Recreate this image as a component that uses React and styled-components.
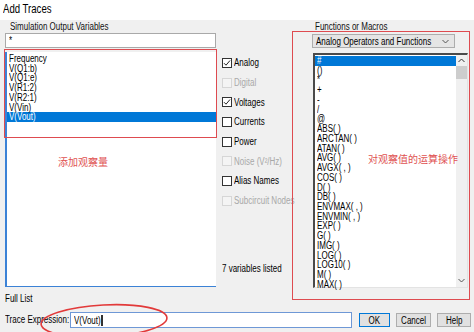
import React from "react";
import styled, { createGlobalStyle } from "styled-components";

const GlobalStyle = createGlobalStyle`
  html, body {
    margin: 0;
    padding: 0;
    background: #f0f0f0;
  }
  body {
    width: 474px;
    height: 332px;
    overflow: hidden;
    font-family: "Liberation Sans", Arial, sans-serif;
    color: #000;
  }
`;

// the dialog text is a narrow sans, so regular Arial metrics are squeezed
const T = styled.span`
  display: inline-block;
  white-space: nowrap;
  transform: scaleX(0.8);
  transform-origin: ${(p) => (p.center ? "50% 50%" : "0 50%")};
`;

const Window = styled.div`
  position: relative;
  width: 474px;
  height: 332px;
  display: flex;
  flex-direction: column;
  background: #f0f0f0;
`;

const TitleBar = styled.div`
  height: 20px;
  background: #fff;
  font-size: 12px;
  line-height: 18px;
  padding-left: 3px;
  box-sizing: border-box;
`;

const Main = styled.div`
  display: flex;
  height: 270px;
  padding-left: 5px;
`;

const LeftCol = styled.div`
  width: 211px;
  display: flex;
  flex-direction: column;
`;

const SectionLabel = styled.div`
  height: 13px;
  font-size: 10px;
  line-height: 14px;
  padding-left: ${(p) => p.indent || 5}px;
  color: #111;
`;

const TextBox = styled.div`
  height: ${(p) => (p.focused ? 16 : 15)}px;
  box-sizing: border-box;
  border: 1px solid ${(p) => (p.focused ? "#6e98d6" : "#a9a9a9")};
  background: #fff;
  font-size: 10px;
  line-height: 13px;
  padding-left: 3px;
  width: ${(p) => p.width || "auto"};
  display: flex;
  align-items: center;
`;

const Caret = styled.span`
  display: inline-block;
  vertical-align: middle;
  width: 1.5px;
  height: 11px;
  background: #000;
  margin-left: 1px;
`;

const VarList = styled.div`
  position: relative;
  margin-top: 4px;
  height: 235px;
  box-sizing: border-box;
  background: #fff;
  border-left: 2px solid #3b82d6;
  border-bottom: 1px solid #3b82d6;
  padding-top: 2px;
`;

const Item = styled.div`
  height: 9.74px;
  line-height: 9.74px;
  font-size: 10px;
  padding-left: 2px;
  white-space: nowrap;
  background: ${(p) => (p.selected ? "#0078d7" : "transparent")};
  color: ${(p) => (p.selected ? "#fff" : "#000")};
`;

const RedBox = styled.div`
  position: absolute;
  left: ${(p) => p.x}px;
  top: ${(p) => p.y}px;
  width: ${(p) => p.w}px;
  height: ${(p) => p.h}px;
  border: 1.5px solid #de4b50;
  box-sizing: border-box;
  pointer-events: none;
`;

const Note = styled.div`
  position: absolute;
  left: ${(p) => p.x}px;
  top: ${(p) => p.y}px;
  font-family: "Noto Sans CJK SC", sans-serif;
  font-size: 10px;
  line-height: 11px;
  color: #e05252;
  white-space: nowrap;
`;

const MidCol = styled.div`
  width: 70px;
  margin-left: 6px;
  padding-top: 33px;
  display: flex;
  flex-direction: column;
`;

const CheckRow = styled.div`
  height: 19.7px;
  display: flex;
  align-items: center;
  font-size: 10px;
  white-space: nowrap;
  color: ${(p) => (p.disabled ? "#a8a8a8" : "#000")};
`;

const Box = styled.span`
  width: 10px;
  height: 10px;
  box-sizing: border-box;
  border: 1px solid ${(p) => (p.disabled ? "#d6d6d6" : "#333")};
  background: ${(p) => (p.disabled ? "#f4f4f4" : "#fff")};
  margin-right: 2px;
  display: flex;
  align-items: center;
  justify-content: center;
  flex-shrink: 0;
`;

const VarsCount = styled.div`
  margin-top: 52px;
  font-size: 10px;
  line-height: 12px;
  white-space: nowrap;
`;

const RightCol = styled.div`
  position: relative;
  width: 180px;
  display: flex;
  flex-direction: column;
`;

const Dropdown = styled.div`
  margin: 1px 0 0 20px;
  width: 143px;
  height: 14px;
  box-sizing: border-box;
  background: #e5e5e5;
  border: 1px solid #adadad;
  font-size: 10px;
  padding: 0 5px 0 3px;
  display: flex;
  align-items: center;
`;

const DropText = styled.div`
  flex: 1;
  min-width: 0;
  white-space: nowrap;
`;

const FuncList = styled.div`
  position: relative;
  margin: 5px 0 0 21px;
  width: 155px;
  height: 235px;
  box-sizing: border-box;
  display: flex;
  background: #fff;
  border-left: 2px solid #4a4a4a;
  border-top: 2px solid #4a4a4a;
  border-right: 1px solid #e3e3e3;
  border-bottom: 1px solid #e3e3e3;
`;

const FuncItems = styled.div`
  flex: 1;
  padding-top: 1px;
`;

const ScrollBar = styled.div`
  width: 11px;
  background: #f0f0f0;
  display: flex;
  flex-direction: column;
  align-items: center;
  padding: 3px 0 4px;
  box-sizing: border-box;
`;

const Thumb = styled.div`
  width: 11px;
  height: 13px;
  background: #cdcdcd;
  margin-top: 3px;
`;

const Spacer = styled.div`
  flex: 1;
`;

const FullList = styled.div`
  height: 14px;
  font-size: 10px;
  line-height: 12px;
  padding: 3px 0 0 5px;
  box-sizing: border-box;
`;

const TraceRow = styled.div`
  display: flex;
  align-items: flex-start;
  padding: 8px 0 0 5px;
`;

const TraceLabel = styled.div`
  width: 65px;
  font-size: 10px;
  line-height: 16px;
  white-space: nowrap;
`;

const Buttons = styled.div`
  display: flex;
  gap: 6px;
  margin-left: 7px;
  margin-top: 1px;
`;

const Button = styled.div`
  width: ${(p) => p.w}px;
  height: 14px;
  box-sizing: border-box;
  background: #e1e1e1;
  border: 1px solid ${(p) => (p.primary ? "#0078d7" : "#adadad")};
  font-size: 10px;
  display: flex;
  align-items: center;
  justify-content: center;
`;

const Ellipse = styled.svg`
  position: absolute;
  left: 36px;
  top: 298px;
  pointer-events: none;
`;

const Check = () => (
  <svg width="8" height="8" viewBox="0 0 8 8">
    <polyline points="1,4.2 3,6.2 7,1.5" fill="none" stroke="#222" strokeWidth="1" />
  </svg>
);

const Chevron = ({ up }) => (
  <svg width="7" height="5" viewBox="0 0 7 5">
    <polyline
      points={up ? "0.5,4 3.5,1 6.5,4" : "0.5,1 3.5,4 6.5,1"}
      fill="none"
      stroke={up ? "#333" : "#555"}
      strokeWidth="1"
    />
  </svg>
);

const variables = ["Frequency", "V(Q1:b)", "V(Q1:e)", "V(R1:2)", "V(R2:1)", "V(Vin)", "V(Vout)"];

const options = [
  { label: "Analog", checked: true },
  { label: "Digital", disabled: true },
  { label: "Voltages", checked: true },
  { label: "Currents" },
  { label: "Power" },
  { label: "Noise (V²/Hz)", disabled: true },
  { label: "Alias Names" },
  { label: "Subcircuit Nodes", disabled: true },
];

const functions = [
  "#", "()", "*", "+", "-", "/", "@", "ABS( )", "ARCTAN( )", "ATAN( )", "AVG( )",
  "AVGX( , )", "COS( )", "D( )", "DB( )", "ENVMAX( , )", "ENVMIN( , )", "EXP( )",
  "G( )", "IMG( )", "LOG( )", "LOG10( )", "M( )", "MAX( )",
];

export default function App() {
  return (
    <>
      <GlobalStyle />
      <Window>
        <TitleBar><T>Add Traces</T></TitleBar>
        <Main>
          <LeftCol>
            <SectionLabel><T>Simulation Output Variables</T></SectionLabel>
            <TextBox><T>*</T></TextBox>
            <VarList>
              {variables.map((v) => (
                <Item key={v} selected={v === "V(Vout)"}><T>{v}</T></Item>
              ))}
              <RedBox x={-3} y={-3} w={213} h={89} />
              <Note x={51} y={104}>添加观察量</Note>
            </VarList>
          </LeftCol>

          <MidCol>
            {options.map((o) => (
              <CheckRow key={o.label} disabled={o.disabled}>
                <Box disabled={o.disabled}>{o.checked && <Check />}</Box>
                <T>{o.label}</T>
              </CheckRow>
            ))}
            <VarsCount><T>7 variables listed</T></VarsCount>
          </MidCol>

          <RightCol>
            <SectionLabel indent={23}><T>Functions or Macros</T></SectionLabel>
            <Dropdown>
              <DropText><T>Analog Operators and Functions</T></DropText>
              <Chevron />
            </Dropdown>
            <FuncList>
              <FuncItems>
                {functions.map((f, i) => (
                  <Item key={f} selected={i === 0}><T>{f}</T></Item>
                ))}
              </FuncItems>
              <ScrollBar>
                <Chevron up />
                <Thumb />
                <Spacer />
                <Chevron />
              </ScrollBar>
              <Note x={53} y={98}>对观察值的运算操作</Note>
            </FuncList>
            <RedBox x={0} y={11} w={178} h={269} />
          </RightCol>
        </Main>

        <FullList><T>Full List</T></FullList>
        <TraceRow>
          <TraceLabel><T>Trace Expression:</T></TraceLabel>
          <TextBox focused width="282px">
            <T>V(Vout)<Caret /></T>
          </TextBox>
          <Buttons>
            <Button primary w={31}><T center>OK</T></Button>
            <Button w={35}><T center>Cancel</T></Button>
            <Button w={34}><T center>Help</T></Button>
          </Buttons>
        </TraceRow>

        <Ellipse width="140" height="46" viewBox="0 0 140 46">
          <ellipse
            cx="68"
            cy="23"
            rx="63"
            ry="16"
            fill="none"
            stroke="#e23a3a"
            strokeWidth="1.6"
            transform="rotate(-3 68 23)"
          />
        </Ellipse>
      </Window>
    </>
  );
}
